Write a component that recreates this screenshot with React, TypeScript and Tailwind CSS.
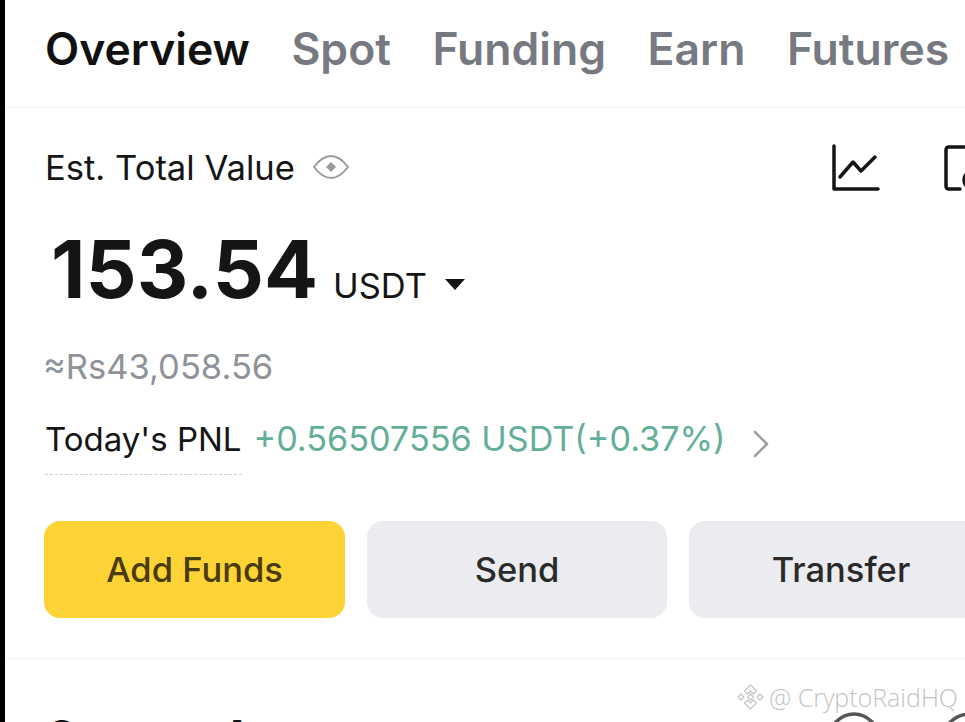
import { ChevronRight } from "lucide-react";

function EyeIcon() {
  return (
    <svg width="38" height="26" viewBox="0 0 38 26" fill="none" className="text-[#9a9a9a]">
      <path d="M2 13 C8 5 13 2 19 2 C25 2 30 5 36 13 C30 21 25 24 19 24 C13 24 8 21 2 13 Z" stroke="currentColor" strokeWidth="2" />
      <path d="M19 8 L24 13 L19 18 L14 13 Z" fill="currentColor" />
    </svg>
  );
}

function ChartIcon() {
  return (
    <svg width="50" height="50" viewBox="0 0 50 50" fill="none" stroke="#151515" strokeWidth="3.5" strokeLinecap="round" strokeLinejoin="round">
      <path d="M3 2 V45 H47" />
      <path d="M9 33 L22 18 L30 27 L44 13" />
    </svg>
  );
}

function HistoryIcon() {
  return (
    <svg width="22" height="50" viewBox="0 0 22 50" fill="none" stroke="#151515" strokeWidth="3.5" strokeLinecap="round" strokeLinejoin="round">
      <path d="M21 3 H6 Q3 3 3 6 V42 Q3 45 6 45 H17" />
      <circle cx="30" cy="36" r="9" />
    </svg>
  );
}

function Watermark() {
  return (
    <div className="absolute left-[737px] top-[684px] flex items-center gap-[5px] text-[#c4c4c4]">
      <svg width="27" height="26" viewBox="0 0 26 26" fill="none" stroke="currentColor" strokeWidth="1.2" strokeLinejoin="round">
        <path d="M13 1 L19 7 L16 10 L13 7 L10 10 L7 7 Z" />
        <path d="M3.5 10 L6.5 13 L3.5 16 L0.5 13 Z" />
        <path d="M22.5 10 L25.5 13 L22.5 16 L19.5 13 Z" />
        <path d="M13 10 L16 13 L13 16 L10 13 Z" />
        <path d="M7 19 L10 16 L13 19 L16 16 L19 19 L13 25 Z" />
      </svg>
      <span className="font-['Open_Sans',sans-serif] text-[25px] font-light leading-none">@ CryptoRaidHQ</span>
    </div>
  );
}

export default function App() {
  return (
    <div className="relative h-[722px] w-[965px] overflow-hidden bg-white pl-[5px] font-['Inter',sans-serif] text-[#151515]">
      <div className="absolute inset-y-0 left-0 w-[5px] bg-black" />

      {/* Tabs */}
      <div className="flex h-[108px] items-center gap-[41.5px] overflow-hidden whitespace-nowrap border-b border-[#f2f2f2] pb-[8px] pl-[40px] text-[44.5px] font-semibold text-[#767a80]">
        <span className="text-[#111]">Overview</span>
        <span>Spot</span>
        <span>Funding</span>
        <span>Earn</span>
        <span>Futures</span>
      </div>

      <div className="pl-[40px]">
        <div className="mt-[36px] flex items-center justify-between">
          <div className="flex items-center gap-[17px] pb-[4px] text-[34.6px] leading-[46px]">
            <span>Est. Total Value</span>
            <EyeIcon />
          </div>
          <div className="flex gap-[62px]">
            <ChartIcon />
            <HistoryIcon />
          </div>
        </div>

        <div className="mt-[29px] flex h-[92px] items-baseline pl-[6px]">
          <span className="text-[80px] font-bold leading-[92px]">153.54</span>
          <span className="ml-[15px] text-[34.5px] leading-[42px]">USDT</span>
          <span className="ml-[18px] h-0 w-0 -translate-y-[8px] border-x-[10px] border-t-[11px] border-x-transparent border-t-[#151515]" />
        </div>

        <div className="ml-[-2px] mt-[29px] text-[34.5px] leading-[46px] text-[#8f9399]">≈Rs43,058.56</div>

        <div className="mt-[26px] flex items-start">
          <span className="border-b border-dashed border-[#cfcfcf] pb-[12px] text-[33px] leading-[46px]">Today's PNL</span>
          <span className="ml-[12px] text-[34.2px] leading-[46px] text-[#63ae98]">+0.56507556 USDT(+0.37%)</span>
          <ChevronRight className="ml-[11px] mt-[4px] text-[#a0a0a0]" size={48} strokeWidth={1.3} />
        </div>

        <div className="ml-[-1px] mt-[46px] flex gap-[22px] whitespace-nowrap text-[34.5px] font-medium">
          <div className="flex h-[97px] w-[301px] shrink-0 items-center justify-center rounded-[16px] bg-[#fdd335] text-[#4a3b0c]">Add Funds</div>
          <div className="flex h-[97px] w-[300px] shrink-0 items-center justify-center rounded-[16px] bg-[#ebecef] text-[#2a2a2a]">Send</div>
          <div className="flex h-[97px] w-[304px] shrink-0 items-center justify-center rounded-[16px] bg-[#ebecef] text-[#2a2a2a]">Transfer</div>
        </div>
      </div>

      <div className="mt-[40px] border-t border-[#f2f2f2]" />

      {/* Next section, cut off by the bottom edge */}
      <div className="mt-[50px] flex items-start justify-between pl-[40px]">
        <span className="mt-[1px] whitespace-nowrap text-[44px] font-semibold leading-[52px]">Custom Account</span>
        <div className="mt-[3px] flex gap-[60px]">
          <svg width="52" height="52" viewBox="0 0 52 52" fill="none" stroke="#555" strokeWidth="3.5">
            <circle cx="26" cy="26" r="24" />
          </svg>
          <svg width="25" height="52" viewBox="0 0 25 52" fill="none" stroke="#555" strokeWidth="3.5">
            <circle cx="30" cy="30" r="28" />
          </svg>
        </div>
      </div>

      <Watermark />
    </div>
  );
}
